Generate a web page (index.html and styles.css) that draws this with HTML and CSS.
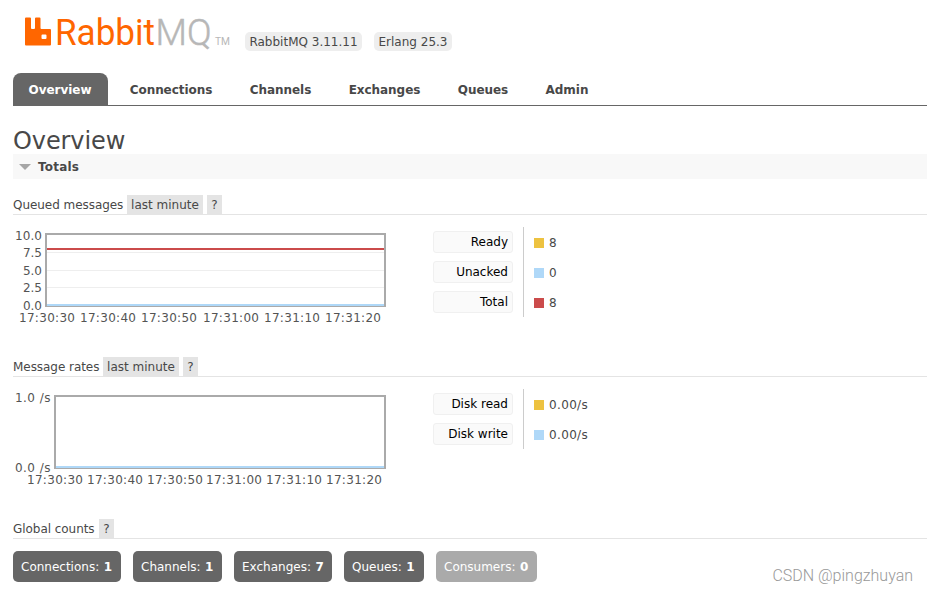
FILE: index.html
```html
<!DOCTYPE html>
<html lang="en">
<head>
<meta charset="utf-8">
<title>RabbitMQ Management</title>
<link rel="stylesheet" href="styles.css">
</head>
<body>
<header class="top">
  <svg class="logo" width="220" height="50" viewBox="0 0 220 50" role="img" aria-label="RabbitMQ">
    <path fill="#f60" fill-rule="evenodd" d="M13 7.500h4q1 0 1 1v9.500q0 1 1 1h2q1 0 1-1v-9.500q0-1 1-1h3.500q1 0 1 1v9.500q0 1 1 1h8.500q1 0 1 1v14.500q0 1-1 1h-24q-1 0-1-1v-26q0-1 1-1zM29.500 24.500q-1 0-1 1v2.500q0 1 1 1h3q1 0 1-1v-2.500q0-1-1-1z"/>
    <text class="logo-name" x="42" y="35" textLength="100" lengthAdjust="spacingAndGlyphs" fill="#f60">Rabbit</text>
    <text class="logo-name light" x="142.500" y="35" textLength="56" lengthAdjust="spacingAndGlyphs" fill="#b7b7b7">MQ</text>
    <text class="logo-tm" x="202" y="35" textLength="15" lengthAdjust="spacingAndGlyphs" fill="#b7b7b7">TM</text>
  </svg>
  <span class="version v-rabbit">RabbitMQ 3.11.11</span>
  <span class="version v-erlang">Erlang 25.3</span>
</header>
<nav class="tabs">
  <a class="tab selected t1">Overview</a><a class="tab t2">Connections</a><a class="tab t3">Channels</a><a class="tab t4">Exchanges</a><a class="tab t5">Queues</a><a class="tab t6">Admin</a>
</nav>
<main>
  <h1>Overview</h1>
  <h2><svg width="12" height="6"><path fill="#a6a6a6" d="M0 0h12l-6 6z"/></svg><span>Totals</span></h2>

  <h3><span class="w-queued">Queued messages</span><span class="range">last minute</span><span class="help">?</span></h3>
  <section class="row">
    <svg class="chart" width="400" height="112" viewBox="0 0 400 112">
      <g stroke="#eee"><path d="M34 37.500h338M34 55.500h338M34 72.500h338"/></g>
      <rect x="33" y="19" width="339" height="72" fill="none" stroke="#aaa" stroke-width="2"/>
      <path stroke="#cb4b4b" stroke-width="2" d="M34 34h337"/>
      <path stroke="#afd8f8" stroke-width="2" d="M34 90h337"/>
      <g class="ylab">
        <text x="2" y="25" textLength="27">10.0</text><text x="10" y="42" textLength="19">7.5</text><text x="10" y="60" textLength="19">5.0</text><text x="10" y="77" textLength="19">2.5</text><text x="10" y="95" textLength="19">0.0</text>
        <text x="6" y="107" textLength="56">17:30:30</text><text x="67" y="107" textLength="56">17:30:40</text><text x="128" y="107" textLength="56">17:30:50</text><text x="190" y="107" textLength="56">17:31:00</text><text x="251" y="107" textLength="56">17:31:10</text><text x="312" y="107" textLength="56">17:31:20</text>
      </g>
    </svg>
    <div class="legend">
      <div class="entry"><span class="key">Ready</span><span class="value"><i class="swatch yellow"></i>8</span></div>
      <div class="entry"><span class="key">Unacked</span><span class="value"><i class="swatch blue"></i>0</span></div>
      <div class="entry"><span class="key">Total</span><span class="value"><i class="swatch red"></i>8</span></div>
    </div>
  </section>

  <h3><span class="w-rates">Message rates</span><span class="range">last minute</span><span class="help">?</span></h3>
  <section class="row">
    <svg class="chart" width="400" height="112" viewBox="0 0 400 112">
      <rect x="42" y="19" width="330" height="72" fill="none" stroke="#aaa" stroke-width="2"/>
      <path stroke="#afd8f8" stroke-width="2" d="M43 90h328"/>
      <g class="ylab">
        <text x="2" y="25" textLength="35.500">1.0 /s</text><text x="2" y="95" textLength="35.500">0.0 /s</text>
        <text x="14" y="107" textLength="56">17:30:30</text><text x="74" y="107" textLength="56">17:30:40</text><text x="134" y="107" textLength="56">17:30:50</text><text x="193" y="107" textLength="56">17:31:00</text><text x="253" y="107" textLength="56">17:31:10</text><text x="313" y="107" textLength="56">17:31:20</text>
      </g>
    </svg>
    <div class="legend">
      <div class="entry"><span class="key">Disk read</span><span class="value rate"><i class="swatch yellow"></i>0.00/s</span></div>
      <div class="entry"><span class="key">Disk write</span><span class="value rate"><i class="swatch blue"></i>0.00/s</span></div>
    </div>
  </section>

  <h3><span class="w-global">Global counts</span><span class="help">?</span></h3>
  <div class="counts">
    <a class="c1">Connections: <b>1</b></a><a class="c2">Channels: <b>1</b></a><a class="c3">Exchanges: <b>7</b></a><a class="c4">Queues: <b>1</b></a><a class="c5 zero">Consumers: <b>0</b></a>
  </div>
</main>
<div class="watermark">CSDN @pingzhuyan</div>
</body>
</html>
```
FILE: styles.css
```css
* { box-sizing: border-box; }
body {
  margin: 0;
  height: 594px;
  overflow: hidden;
  padding-left: 13px;
  background: #fff;
  color: #484848;
  font: 12px/18px Verdana, "DejaVu Sans", sans-serif;
  white-space: nowrap;
}
.top { display: flex; height: 73px; padding-top: 10px; }
.logo { display: block; flex: none; }
.logo-name { font: 400 37px Roboto, sans-serif; }
.light { font-weight: 300; stroke: #b7b7b7; stroke-width: .5px; }
.logo-tm { font: 10px Roboto, sans-serif; }
.version {
  height: 19px;
  margin-top: 22px;
  border-radius: 5px;
  background: #eee;
  text-align: center;
  line-height: 20px;
}
.v-rabbit { width: 117px; margin-left: 12px; }
.v-erlang { width: 78px; margin-left: 12px; }
.tabs { display: flex; gap: 7px; height: 33px; border-bottom: 1px solid #666; }
.tab {
  height: 32px;
  padding-right: 1px;
  border-radius: 8px 8px 0 0;
  font-weight: bold;
  letter-spacing: -0.05px;
  line-height: 34px;
  text-align: center;
}
.selected { background: #666; color: #fff; }
.t1 { width: 95px; }
.t2 { width: 113px; }
.t3 { width: 92px; }
.t4 { width: 102px; }
.t5 { width: 81px; }
.t6 { width: 73px; }
h1 { margin: 20px 0 0; height: 28px; font-size: 24px; font-weight: normal; letter-spacing: -0.1px; line-height: 31px; }
h2 {
  display: flex;
  align-items: center;
  gap: 7px;
  height: 25px;
  margin: 0;
  padding-left: 6px;
  background: #f8f8f8;
  font-size: 12px;
  letter-spacing: .2px;
}
h3 {
  display: flex;
  height: 20px;
  margin: 16px 0 0;
  border-bottom: 1px solid #e4e4e4;
  font-size: 12px;
  font-weight: normal;
  line-height: 20px;
}
h3 span { height: 19px; }
.w-queued { width: 114px; letter-spacing: -0.05px; }
.w-rates { width: 90px; letter-spacing: -0.05px; }
.w-global { width: 86px; letter-spacing: -0.05px; }
.range { width: 76px; margin-right: 4px; background: #e4e4e4; text-align: center; }
.help { width: 15px; background: #e4e4e4; text-align: center; }
.row { display: flex; height: 126px; }
.chart { display: block; flex: none; }
.ylab { fill: #545454; font-size: 12px; }
.legend { margin: 12px 0 0 20px; }
.entry { display: flex; height: 30px; }
.key {
  width: 80px;
  height: 22px;
  margin: 4px 10px 0 0;
  padding-right: 4px;
  border: 1px solid #f0f0f0;
  border-radius: 3px;
  background: #fafafa;
  color: #000;
  line-height: 20px;
  text-align: right;
}
.value { display: flex; align-items: center; border-left: 1px solid #ccc; padding: 1px 0 0 10px; }
.rate { letter-spacing: .35px; }
.swatch { width: 10px; height: 10px; margin-right: 5px; }
.yellow { background: #edc240; }
.blue { background: #afd8f8; }
.red { background: #cb4b4b; }
.counts { display: flex; gap: 12px; margin-top: 12px; }
.counts a {
  height: 31px;
  padding-left: 8px;
  border-radius: 5px;
  background: #666;
  color: #fff;
  line-height: 32px;
}
.counts .zero { background: #aaa; }
.c1 { width: 108px; }
.c2 { width: 89px; }
.c3 { width: 98px; }
.c4 { width: 80px; }
.c5 { width: 101px; }
.counts b { margin-left: .7px; }
.watermark {
  position: absolute;
  right: 14px;
  bottom: 9px;
  color: #999;
  font: 300 16px/18px Roboto, sans-serif;
}
```
